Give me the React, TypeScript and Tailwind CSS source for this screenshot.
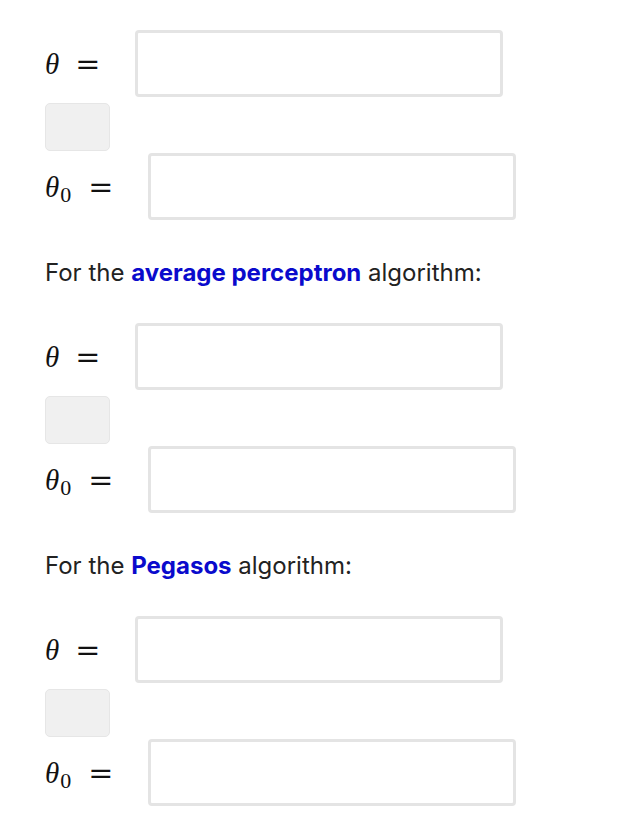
import React from "react";

const math = { fontFamily: '"Liberation Serif", "DejaVu Serif", serif' };

const Equation = ({ sub }: { sub?: boolean }) => (
  <div className="flex items-center h-[67px]">
    <span
      className={`${sub ? "w-[103px]" : "w-[90px]"} flex items-baseline text-[29px] leading-none text-[#111]`}
      style={math}
    >
      <i>θ</i>
      {sub && <span className="text-[22px] not-italic translate-y-[5px] ml-[1px]">0</span>}
      <span className={`${sub ? "ml-[17px]" : "ml-[16px]"} text-[30px]`} style={{ fontFamily: '"DejaVu Serif", serif' }}>
        =
      </span>
    </span>
    <input
      type="text"
      className="w-[368px] h-[67px] border-[3px] border-[#e4e4e4] rounded-[4px] bg-white outline-none"
    />
  </div>
);

const Block = () => (
  <div className="flex flex-col">
    <Equation />
    <div className="mt-[6px] w-[65px] h-[48px] rounded-[5px] bg-[#f0f0f0] border border-[#e6e6e6]" />
    <div className="mt-[2px]">
      <Equation sub />
    </div>
  </div>
);

const Heading = ({ name }: { name: string }) => (
  <p className="mt-[38px] mb-[35px] text-[24px] leading-[30px] text-[#222]" style={{ fontFamily: "Inter, sans-serif" }}>
    For the <b className="font-bold text-[#0a0acc]">{name}</b> algorithm:
  </p>
);

export default function App() {
  return (
    <div className="w-[630px] min-h-[823px] bg-white pl-[45px] pt-[30px]">
      <Block />
      <Heading name="average perceptron" />
      <Block />
      <Heading name="Pegasos" />
      <Block />
    </div>
  );
}
